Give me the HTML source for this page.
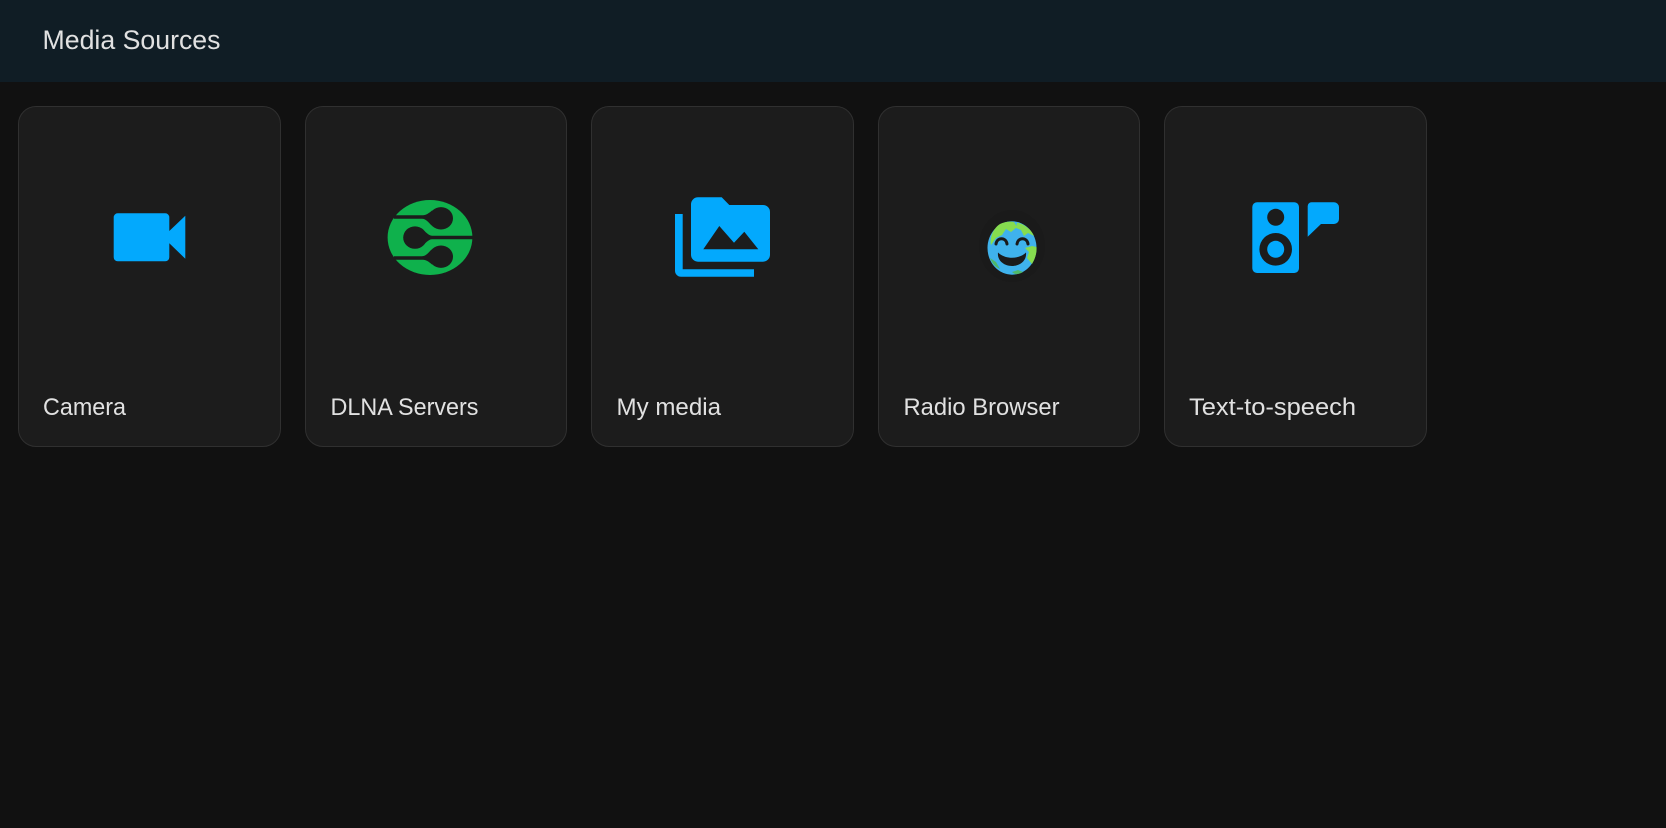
<!DOCTYPE html>
<html lang="en">
<head>
<meta charset="utf-8">
<title>Media Sources</title>
<style>
html,body{margin:0;padding:0;width:1666px;height:828px;overflow:hidden;background:#111111;}
.header{position:absolute;left:0;top:0;width:1666px;height:82px;background:#101d25;}
.card{position:absolute;top:106px;height:340.500px;width:262.500px;box-sizing:border-box;background:#1c1c1c;border:1px solid #303030;border-radius:18px;}
svg{position:absolute;left:0;top:0;}
text{font-family:"Liberation Sans",sans-serif;fill:#e1e1e1;}
</style>
</head>
<body>
<div class="header"></div>
<div class="card" style="left:18.200px"></div>
<div class="card" style="left:305px;width:261.700px"></div>
<div class="card" style="left:591px;width:263.200px"></div>
<div class="card" style="left:878px;width:261.700px"></div>
<div class="card" style="left:1164.400px"></div>
<svg width="1666" height="828" viewBox="0 0 1666 828" xmlns="http://www.w3.org/2000/svg">
  <text x="42.500" y="49" font-size="26.500" textLength="178" lengthAdjust="spacingAndGlyphs">Media Sources</text>
  <text x="43" y="415" font-size="24" textLength="83" lengthAdjust="spacingAndGlyphs">Camera</text>
  <text x="330.500" y="415" font-size="24" textLength="148" lengthAdjust="spacingAndGlyphs">DLNA Servers</text>
  <text x="616.500" y="415" font-size="24" textLength="104.500" lengthAdjust="spacingAndGlyphs">My media</text>
  <text x="903.500" y="415" font-size="24" textLength="156" lengthAdjust="spacingAndGlyphs">Radio Browser</text>
  <text x="1189" y="415" font-size="24" textLength="167" lengthAdjust="spacingAndGlyphs">Text-to-speech</text>

  <!-- Camera -->
  <path fill="#03a9fd" d="M117.700 213.300H165.300a4 4 0 0 1 4 4V231L185.300 215.700V258.700L169.300 243.300V257.300a4 4 0 0 1-4 4H117.700a4 4 0 0 1-4-4V217.300a4 4 0 0 1 4-4Z"/>

  <!-- DLNA -->
  <ellipse cx="430" cy="237.500" rx="42.400" ry="37.500" fill="#0fb14c"/>
  <g fill="#1c1c1c" stroke="none">
    <ellipse cx="441" cy="218.300" rx="12" ry="11.200"/>
    <ellipse cx="415" cy="237.600" rx="11.800" ry="11.200"/>
    <ellipse cx="441" cy="256.700" rx="12" ry="11.200"/>
    <path d="M394 215.200H423C426 215.200 428.500 213.500 432 210.500L434 222L431.500 225.500C428.500 222.500 426 218.800 422 218.800H394Z"/>
    <path d="M394 256.200H422C426 256.200 428.500 252.500 431.500 249.500L434 253L432 264.500C428.500 261.500 426 259.800 423 259.800H394Z"/>
    <path d="M422 229C425.500 231.500 428.500 235.700 432 235.700H474V239.300H432C428.500 239.300 425.500 243.500 422 246Z"/>
  </g>

  <!-- My media -->
  <path fill="#03a9fd" d="M698 197.300H721.700L729.300 205H763a7 7 0 0 1 7 7V254.700a7 7 0 0 1-7 7H698a7 7 0 0 1-7-7V204.300a7 7 0 0 1 7-7Z"/>
  <path fill="#1c1c1c" d="M703.300 249.300L719.300 226L734 242.700L744.300 231.700L758.300 249.300Z"/>
  <path fill="#03a9fd" d="M675 214H682.700V269.300H754V276.700H681a6 6 0 0 1-6-6Z"/>

  <!-- Radio Browser globe -->
  <ellipse cx="1012" cy="246" rx="33" ry="36" fill="#1a1a1a"/>
  <ellipse cx="1012" cy="248" rx="24.500" ry="26.700" fill="#3fb2ec"/>
  <path fill="#86dc4f" d="M1000 224C1004 222 1010 221 1014 222L1017 227L1011 232L1006 229L1002 235L996 238L991 245C989.500 240 992 229 1000 224Z"/>
  <path fill="#86dc4f" d="M1017 222.500C1024 224 1031 229 1034 236L1028 233L1024 236L1021 230L1016 228Z"/>
  <path fill="#86dc4f" d="M1036.500 247C1037 253 1035 259 1032 264L1027 258L1029 252L1025 248L1032 246Z"/>
  <path fill="#4fb86a" d="M990 258L996 262L1000 269C995 267 992 263 990 258ZM1012 272L1018 270L1023 272C1019 274.500 1015 275 1012 272Z"/>
  <path fill="none" stroke="#1a1a1a" stroke-width="3" stroke-linecap="round" d="M996 244C997 237 1006 237 1007 244M1017 244C1018 237 1027 237 1028 244"/>
  <path fill="#1a1a1a" d="M998 252.500C1005 259.500 1019 259.500 1026 252.500C1027 260.500 1020 266 1012 266C1004 266 997 260.500 998 252.500Z"/>

  <!-- Text-to-speech -->
  <path fill="#03a9fd" d="M1257 202.300H1294.300a4.700 4.700 0 0 1 4.700 4.700V268.300a4.700 4.700 0 0 1-4.700 4.700H1257a4.700 4.700 0 0 1-4.700-4.700V207a4.700 4.700 0 0 1 4.700-4.700Z"/>
  <circle cx="1275.700" cy="217.300" r="8.500" fill="#1c1c1c"/>
  <circle cx="1275.700" cy="249.300" r="16.300" fill="#1c1c1c"/>
  <circle cx="1275.700" cy="249.300" r="8.500" fill="#03a9fd"/>
  <path fill="#03a9fd" d="M1311.500 202.300H1334a5 5 0 0 1 5 5V219a5 5 0 0 1-5 5H1321L1307.700 236.700V206.100a3.800 3.800 0 0 1 3.800-3.800Z"/>
</svg>
</body>
</html>
